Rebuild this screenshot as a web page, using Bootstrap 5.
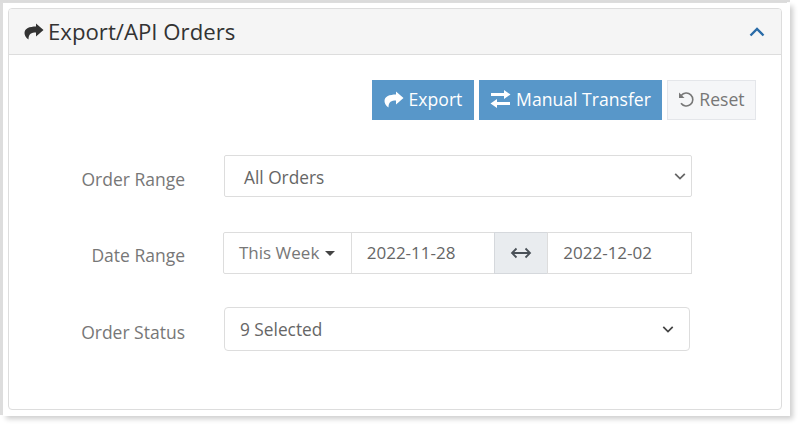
<!DOCTYPE html>
<html lang="en">
<head>
<meta charset="utf-8">
<title>Export/API Orders</title>
<link href="https://cdn.jsdelivr.net/npm/bootstrap@5.3.0/dist/css/bootstrap.min.css" rel="stylesheet">
<style>
html,body{height:427px;overflow:hidden}
body{background:#fff;font-family:"Open Sans",sans-serif;position:relative}
.frame-edge{height:427px;padding:3px 10px 11px 3px;background:linear-gradient(#dcdcdc,#dcdcdc) top left/790px 2px no-repeat}
.shot{height:413px;width:787px;background:#fff;padding:5px 8px 6px 5px;box-shadow:-3px -1px 0 #ddd,3px 3px 5px #cfcfcf}
.panel{height:402px;border:1px solid #ddd;border-radius:4px;overflow:hidden;--bs-card-cap-bg:#f5f5f5;--bs-card-border-color:#ddd}
.panel-head{height:46px;background:#f5f5f5;border-bottom:1px solid #ddd;padding:0 16px 0 15px;color:#333;font-size:22.2px;line-height:45px}
.panel-head svg{vertical-align:-2px}
.tools{padding:25px 25px 0 0;gap:5px}
.act{height:40px;border-radius:0;font-size:17.6px;padding:0 0 2px;display:flex;align-items:center;justify-content:center;gap:5px}
.act-blue{background:#5897c9;border:1px solid #5897c9;color:#fff}
.act-blue:hover{background:#5897c9;color:#fff}
.act-grey{background:#f5f6f8;border:1px solid #e4e6ea;color:#777;gap:4px}
.w-export{width:102px}.w-manual{width:183px}.w-reset{width:89px}
.field{display:flex;align-items:flex-start}
.lbl{width:176px;text-align:right;color:#777;font-size:17.5px;flex:none;margin:0}
.sel{height:42px;border:1px solid #ddd;border-radius:2px;background:#fff;color:#666;font-size:17.3px;display:flex;align-items:center;justify-content:space-between}
.f1{margin-top:35px}.f1 .lbl{padding-top:11px}.f1 .sel{width:468px;margin-left:39px;padding:3px 4px 0 19px}
.f1 .sel svg{margin-top:-3px}
.f2{margin-top:35px}.f2 .lbl{padding-top:10px}.f2 .dates{width:469px;margin-left:38px;height:42px;display:flex}
.f3{margin-top:33px}.f3 .lbl{padding-top:12px}.f3 .sel{width:466px;height:44px;margin-left:39px;padding:1px 15px 0 15px;border-radius:4px}
.dd,.dt,.sw{border:1px solid #ddd;height:42px;display:flex;align-items:center;font-size:17px;color:#666}
.dd{width:129px;padding:0 0 0 15px;gap:6px;border-radius:2px 0 0 2px;color:#777}
.caret-dn{width:0;height:0;border-top:5px solid #444;border-left:5px solid transparent;border-right:5px solid transparent}
.dt{margin-left:-1px;background:#fff}
.dt1{width:145px;padding-left:15px}
.dt2{width:145px;padding-left:15px}
.sw{width:54px;margin-left:-1px;background:#e9ecef;justify-content:center;border-color:#d5d8dc}
</style>
</head>
<body>
<div class="frame-edge">
<div class="shot">
<div class="panel card">
  <div class="panel-head d-flex justify-content-between align-items-center">
    <span class="d-flex align-items-center gap-1"><svg width="20" height="17" viewBox="0 0 20 17"><path fill="#333" d="M12 .5 19.5 7 12 13.500V9.500C7.500 9.500 4.500 10.500 4.500 16.500 1.500 14.500.5 12 .5 10c0-4.500 5-6.500 11.500-6.500z"/></svg>Export/API Orders</span>
    <svg width="16" height="10" viewBox="0 0 16 10"><path d="M1.500 8.500 8 2l6.500 6.500" fill="none" stroke="#2a6ca8" stroke-width="2.400"/></svg>
  </div>
  <div class="d-flex justify-content-end tools">
    <button class="btn act act-blue w-export"><svg width="20" height="17" viewBox="0 0 20 17"><path fill="#fff" d="M12 .5 19.500 7 12 13.500V9.500C7.500 9.500 4.500 10.500 4.500 16.500 1.500 14.500.5 12 .5 10c0-4.500 5-6.500 11.500-6.500z"/></svg>Export</button>
    <button class="btn act act-blue w-manual"><svg width="21" height="18" viewBox="0 0 21 18"><path fill="#fff" d="M14 0l6.500 4.500L14 9V6H1V3h13zM7 9v3h13v3H7v3L.5 13.500z"/></svg>Manual Transfer</button>
    <button class="btn act act-grey w-reset"><svg width="17" height="17" viewBox="0 0 17 17"><path fill="none" stroke="#777" stroke-width="1.600" d="M3.200 4.500A6.500 6.500 0 1 1 3 12.300"/><path fill="#777" d="M1 1.500V7h5.500z"/></svg>Reset</button>
  </div>
  <div class="field f1">
    <label class="lbl">Order Range</label>
    <div class="sel"><span>All Orders</span><svg width="14" height="14" viewBox="0 0 16 16"><path d="M2.500 5.500 8 11l5.500-5.500" fill="none" stroke="#666" stroke-width="2"/></svg></div>
  </div>
  <div class="field f2">
    <label class="lbl">Date Range</label>
    <div class="dates">
      <div class="dd">This Week<span class="caret-dn"></span></div>
      <div class="dt dt1">2022-11-28</div>
      <div class="sw"><svg width="22" height="14" viewBox="0 0 22 14"><path d="M2 7h18M6.500 2.500 2 7l4.500 4.500M15.500 2.500 20 7l-4.500 4.500" fill="none" stroke="#495057" stroke-width="1.800"/></svg></div>
      <div class="dt dt2">2022-12-02</div>
    </div>
  </div>
  <div class="field f3">
    <label class="lbl">Order Status</label>
    <div class="sel"><span>9 Selected</span><svg width="12" height="9" viewBox="0 0 14 10"><path d="M1.500 2 7 7.500 12.500 2" fill="none" stroke="#444" stroke-width="2"/></svg></div>
  </div>
</div>
</div>
</div>
<script src="https://cdn.jsdelivr.net/npm/bootstrap@5.3.0/dist/js/bootstrap.bundle.min.js"></script>
</body>
</html>
